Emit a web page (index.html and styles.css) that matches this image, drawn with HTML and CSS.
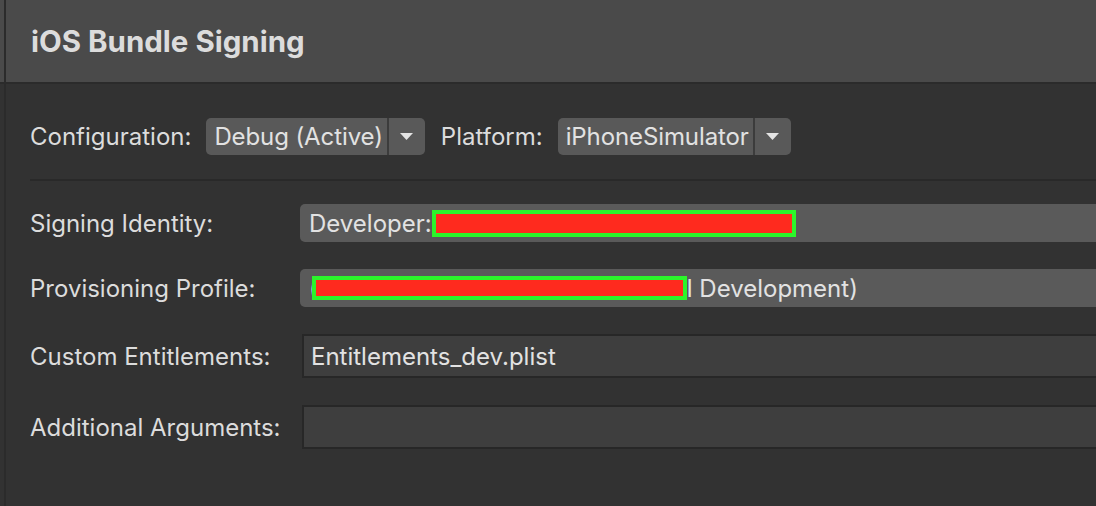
FILE: index.html
```html
<!DOCTYPE html>
<html lang="en">
<head>
  <meta charset="UTF-8" />
  <title>iOS Bundle Signing</title>
  <link rel="stylesheet" href="styles.css">
</head>
<body>

  <div class="header">
    <div class="header-inner">
      <h1 class="title">iOS Bundle Signing</h1>
    </div>
  </div>

  <div class="content">
    <div class="config-row">
      <span class="label">Configuration:</span>
      <div class="dropdown">
        <span class="dropdown-text">Debug (Active)</span>
        <span class="dropdown-arrow">
          <svg width="13" height="7" viewBox="0 0 13 7"><polygon points="0,0 13,0 6.5,7" fill="#e4e4e4"/></svg>
        </span>
      </div>
      <span class="label">Platform:</span>
      <div class="dropdown">
        <span class="dropdown-text">iPhoneSimulator</span>
        <span class="dropdown-arrow">
          <svg width="13" height="7" viewBox="0 0 13 7"><polygon points="0,0 13,0 6.5,7" fill="#e4e4e4"/></svg>
        </span>
      </div>
    </div>

    <div class="separator"></div>

    <div class="form">
      <div class="form-label">Signing Identity:</div>
      <div class="field combo">Developer:<span class="redact redact-identity"></span></div>

      <div class="form-label">Provisioning Profile:</div>
      <div class="field combo">(<span class="redact redact-profile"></span>l Development)</div>

      <div class="form-label">Custom Entitlements:</div>
      <div class="field entry">Entitlements_dev.plist</div>

      <div class="form-label">Additional Arguments:</div>
      <div class="field entry"></div>
    </div>
  </div>

</body>
</html>
```

FILE: styles.css
```css
body {
  margin: 0;
  background-color: #323232;
  color: #dedede;
  font-family: Inter, "Noto Sans", sans-serif;
  overflow: hidden;
  height: 506px;
}

.header {
  background: #4a4a4a;
  padding-left: 4px;
  border-bottom: 2px solid #2b2b2b;
}

.header-inner {
  border-left: 2px solid #2b2b2b;
  height: 82px;
  display: flex;
  align-items: center;
  padding-left: 25px;
}

.title {
  margin: 0;
  font-size: 29.5px;
  font-weight: bold;
  color: #dcdcdc;
}

.content {
  margin-left: 4px;
  border-left: 2px solid #2b2b2b;
  padding-left: 24px;
  padding-top: 34px;
  height: 388px;
}

.label,
.form-label {
  font-size: 24px;
  color: #dcdcdc;
}

.config-row {
  display: flex;
  align-items: center;
  height: 37px;
}

.config-row .label {
  margin-right: 15px;
}

.config-row .dropdown {
  margin-right: 16px;
}

.dropdown {
  display: flex;
  height: 37px;
  background: #595959;
  border-radius: 5px;
  overflow: hidden;
}

.dropdown-text {
  display: flex;
  align-items: center;
  padding: 0 4px 0 8px;
  font-size: 24px;
  letter-spacing: -0.1px;
  color: #e2e2e2;
  border-right: 2px solid #3c3c3c;
}

.dropdown-arrow {
  width: 36px;
  display: flex;
  align-items: center;
  justify-content: center;
}

.separator {
  height: 2px;
  background: #292929;
  margin-top: 24px;
  margin-bottom: 23px;
}

.form {
  display: grid;
  grid-template-columns: 270px 1fr;
  row-gap: 27px;
  margin-right: -20px;
}

.form-label {
  display: flex;
  align-items: center;
}

.field {
  display: flex;
  align-items: center;
  font-size: 24px;
  color: #e2e2e2;
  white-space: nowrap;
}

.field.combo {
  height: 38px;
  background: #5a5a5a;
  border-radius: 5px;
  padding-left: 9px;
}

.field.entry {
  height: 40px;
  margin-left: 2px;
  background: #3e3e3e;
  border: 2px solid #272727;
  padding-left: 7px;
}

.redact {
  display: inline-block;
  height: 19px;
  background: #ff2a1e;
  border: 4px solid #2bf52b;
}

.redact-identity {
  width: 356px;
  margin-left: 0;
}

.redact-profile {
  width: 367px;
  margin-left: -6px;
  height: 16px;
}
```
